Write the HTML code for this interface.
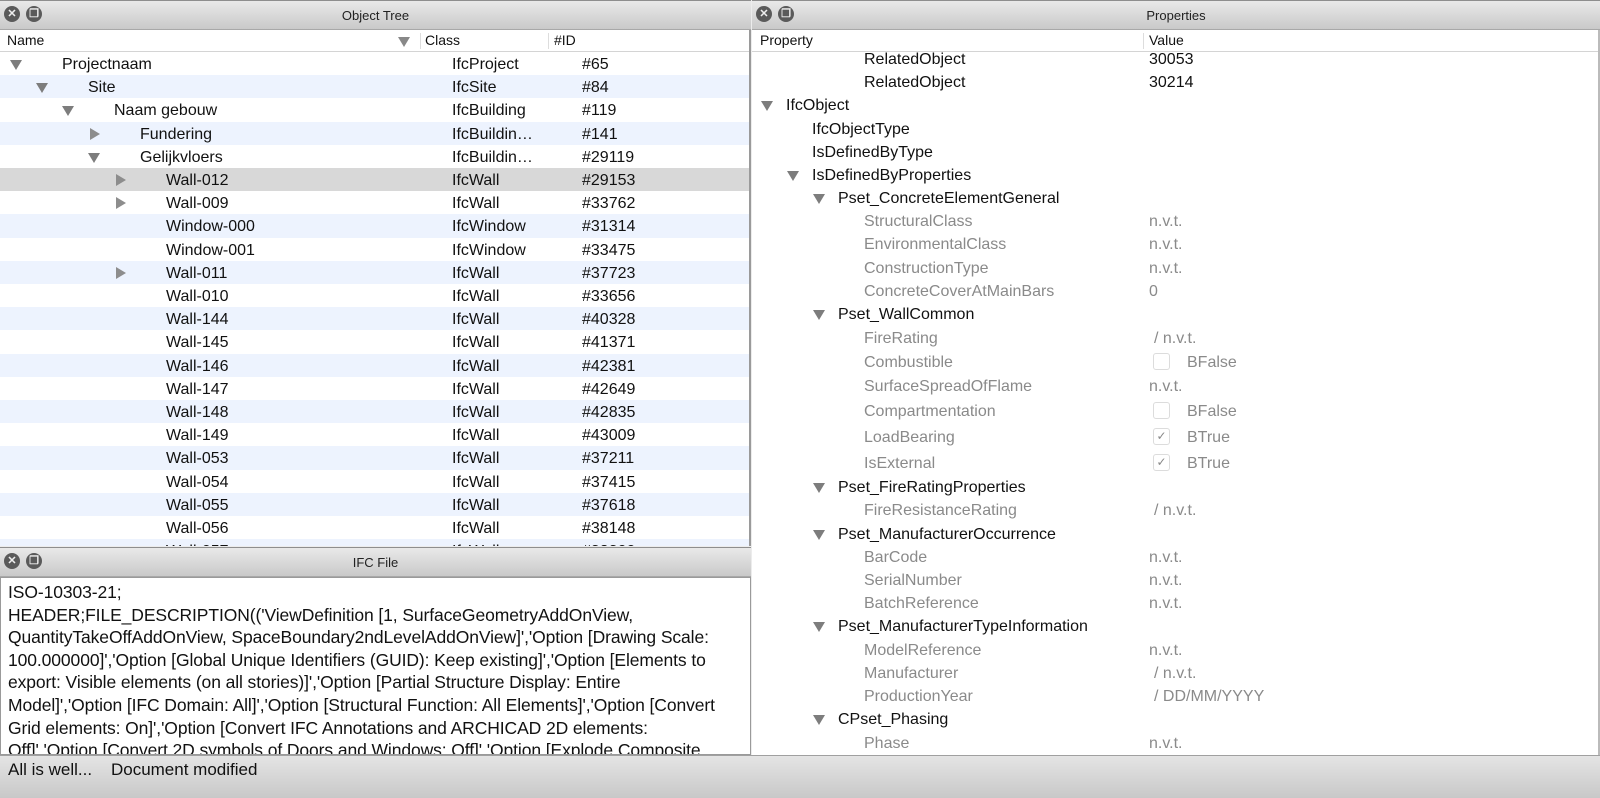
<!DOCTYPE html>
<html><head><meta charset="utf-8"><style>
*{margin:0;padding:0;box-sizing:border-box}
body{width:1600px;height:798px;overflow:hidden;background:#ececec;font-family:"Liberation Sans",sans-serif;font-size:16px;color:#111;position:relative}
.abs{position:absolute}
.tbar{position:absolute;height:30px;background:linear-gradient(#e9e9e9,#c9c9c9);border-top:1px solid #8e8e8e;border-bottom:1px solid #a8a8a8;font-size:13px;color:#222;text-align:center;line-height:29px}
.btn{position:absolute;top:6px;width:16px;height:16px;border-radius:50%;background:#5a5a5a;color:#eee;font-size:11px;line-height:16px;text-align:center;font-weight:bold}
.hdr{position:absolute;height:22px;background:#fff;border-bottom:1px solid #d4d4d4;font-size:14px;line-height:21px}
.row{position:absolute;height:23.2px;line-height:25px;white-space:nowrap}
.tri{position:absolute;width:0;height:0}
.dn{border-left:6px solid transparent;border-right:6px solid transparent;border-top:10px solid #7d7d7d}
.rt{border-top:6px solid transparent;border-bottom:6px solid transparent;border-left:10px solid #8d8d8d}
.g{color:#8a8a8a}
.cb{position:absolute;width:17px;height:17px;border:1px solid #dcdcdc;border-radius:3px;background:#fff;font-size:12px;color:#888;text-align:center;line-height:15px}
</style></head><body>
<div class="abs" style="left:0;top:0;width:751px;height:546px;background:#fff;border-right:2px solid #9a9a9a"></div>
<div class="tbar" style="left:0;top:0;width:751px">Object Tree</div>
<div class="btn" style="left:4px">✕</div><div class="btn" style="left:26px">❐</div>
<div class="hdr" style="left:0;top:30px;width:749px">
<span class="abs" style="left:7px">Name</span>
<div class="tri dn" style="left:398px;top:7px;border-top-color:#888"></div>
<span class="abs" style="left:420px;top:3px;width:1px;height:16px;background:#ddd"></span>
<span class="abs" style="left:425px">Class</span>
<span class="abs" style="left:548px;top:3px;width:1px;height:16px;background:#ddd"></span>
<span class="abs" style="left:554px">#ID</span>
</div>
<div id="tree" class="abs" style="left:0;top:52px;width:749px;height:494px;overflow:hidden"></div>

<div class="tbar" style="left:0;top:547px;width:751px">IFC File</div>
<div class="btn" style="left:4px;top:553px">✕</div><div class="btn" style="left:26px;top:553px">❐</div>
<div class="abs" style="left:0;top:577px;width:751px;height:178px;background:#fff;border:1px solid #9a9a9a;overflow:hidden;font-family:'Liberation Sans',sans-serif;font-size:17.5px;line-height:22.6px;padding:3px 0 0 7px;white-space:nowrap;letter-spacing:-0.1px">
ISO-10303-21;<br>
HEADER;FILE_DESCRIPTION(('ViewDefinition [1, SurfaceGeometryAddOnView,<br>
QuantityTakeOffAddOnView, SpaceBoundary2ndLevelAddOnView]','Option [Drawing Scale:<br>
100.000000]','Option [Global Unique Identifiers (GUID): Keep existing]','Option [Elements to<br>
export: Visible elements (on all stories)]','Option [Partial Structure Display: Entire<br>
Model]','Option [IFC Domain: All]','Option [Structural Function: All Elements]','Option [Convert<br>
Grid elements: On]','Option [Convert IFC Annotations and ARCHICAD 2D elements:<br>
Off]','Option [Convert 2D symbols of Doors and Windows: Off]','Option [Explode Composite<br>
and Complex Profile elements into parts: On]','Option [Export geometries that Partially touch
</div>

<div class="abs" style="left:752px;top:0;width:848px;height:755px;background:#fff;border-right:2px solid #bbb"></div>
<div class="tbar" style="left:752px;top:0;width:848px">Properties</div>
<div class="btn" style="left:756px">✕</div><div class="btn" style="left:778px">❐</div>
<div class="hdr" style="left:752px;top:30px;width:846px">
<span class="abs" style="left:8px">Property</span>
<span class="abs" style="left:391px;top:3px;width:1px;height:16px;background:#ddd"></span>
<span class="abs" style="left:397px">Value</span>
</div>
<div id="props" class="abs" style="left:752px;top:52px;width:846px;height:703px;overflow:hidden"></div>

<div class="abs" style="left:0;top:755px;width:1600px;height:43px;background:linear-gradient(#e4e4e4,#c8c8c8);border-top:1px solid #a0a0a0;font-size:17px;line-height:28px;padding-left:8px">All is well...&nbsp;&nbsp;&nbsp;&nbsp;Document modified</div>

<script>
var T=[[0,'d','Projectnaam','IfcProject','#65'],[1,'d','Site','IfcSite','#84'],[2,'d','Naam gebouw','IfcBuilding','#119'],[3,'r','Fundering','IfcBuildin…','#141'],[3,'d','Gelijkvloers','IfcBuildin…','#29119'],[4,'r','Wall-012','IfcWall','#29153'],[4,'r','Wall-009','IfcWall','#33762'],[4,'','Window-000','IfcWindow','#31314'],[4,'','Window-001','IfcWindow','#33475'],[4,'r','Wall-011','IfcWall','#37723'],[4,'','Wall-010','IfcWall','#33656'],[4,'','Wall-144','IfcWall','#40328'],[4,'','Wall-145','IfcWall','#41371'],[4,'','Wall-146','IfcWall','#42381'],[4,'','Wall-147','IfcWall','#42649'],[4,'','Wall-148','IfcWall','#42835'],[4,'','Wall-149','IfcWall','#43009'],[4,'','Wall-053','IfcWall','#37211'],[4,'','Wall-054','IfcWall','#37415'],[4,'','Wall-055','IfcWall','#37618'],[4,'','Wall-056','IfcWall','#38148'],[4,'','Wall-057','IfcWall','#38300']];
var h='';
T.forEach(function(r,i){var y=i*23.2;var bg=i==5?'#d8d8d8':(i%2?'#edf3fe':'#fff');
h+='<div class="row" style="left:0;top:'+y+'px;width:749px;background:'+bg+'">';
var ax=10+r[0]*26;
if(r[1]=='d')h+='<div class="tri dn" style="left:'+ax+'px;top:8px"></div>';
if(r[1]=='r')h+='<div class="tri rt" style="left:'+(ax+2)+'px;top:6px"></div>';
h+='<span class="abs" style="left:'+(62+r[0]*26)+'px">'+r[2]+'</span><span class="abs" style="left:452px">'+r[3]+'</span><span class="abs" style="left:582px">'+r[4]+'</span></div>';});
document.getElementById('tree').innerHTML=h;
var P=[[59,3,'','RelatedObject','30053',0],[82,3,'','RelatedObject','30214',0],[105,0,'d','IfcObject','',0],[129,1,'','IfcObjectType','',0],[152,1,'','IsDefinedByType','',0],[175,1,'d','IsDefinedByProperties','',0],[198,2,'d','Pset_ConcreteElementGeneral','',0],
[221,3,'','StructuralClass','n.v.t.',1],[244,3,'','EnvironmentalClass','n.v.t.',1],[268,3,'','ConstructionType','n.v.t.',1],[291,3,'','ConcreteCoverAtMainBars','0',1],[314,2,'d','Pset_WallCommon','',0],
[338,3,'','FireRating',' / n.v.t.',1],[362,3,'','Combustible','cbBFalse',1],[386,3,'','SurfaceSpreadOfFlame','n.v.t.',1],[411,3,'','Compartmentation','cbBFalse',1],[437,3,'','LoadBearing','ckBTrue',1],[463,3,'','IsExternal','ckBTrue',1],
[487,2,'d','Pset_FireRatingProperties','',0],[510,3,'','FireResistanceRating',' / n.v.t.',1],[534,2,'d','Pset_ManufacturerOccurrence','',0],[557,3,'','BarCode','n.v.t.',1],[580,3,'','SerialNumber','n.v.t.',1],[603,3,'','BatchReference','n.v.t.',1],
[626,2,'d','Pset_ManufacturerTypeInformation','',0],[650,3,'','ModelReference','n.v.t.',1],[673,3,'','Manufacturer',' / n.v.t.',1],[696,3,'','ProductionYear',' / DD/MM/YYYY',1],[719,2,'d','CPset_Phasing','',0],[743,3,'','Phase','n.v.t.',1]];
h='';
P.forEach(function(p){var y=p[0]-52-11.6;var c=p[5]?' g':'';
h+='<div class="row'+c+'" style="left:0;top:'+y+'px;width:846px">';
if(p[2])h+='<div class="tri dn" style="left:'+(9+p[1]*26)+'px;top:8px"></div>';
h+='<span class="abs" style="left:'+(34+p[1]*26)+'px">'+p[3]+'</span>';
var v=p[4];
if(v.indexOf('cb')==0||v.indexOf('ck')==0){h+='<div class="cb" style="left:401px;top:3px">'+(v[1]=='k'?'✓':'')+'</div><span class="abs" style="left:435px">'+v.slice(2)+'</span>';}
else if(v.charAt(0)==' ')h+='<span class="abs" style="left:402px">'+v.slice(1)+'</span>';
else h+='<span class="abs" style="left:397px;color:'+(p[5]?'#8a8a8a':'#111')+'">'+v+'</span>';
h+='</div>';});
document.getElementById('props').innerHTML=h;
</script>
</body></html>
